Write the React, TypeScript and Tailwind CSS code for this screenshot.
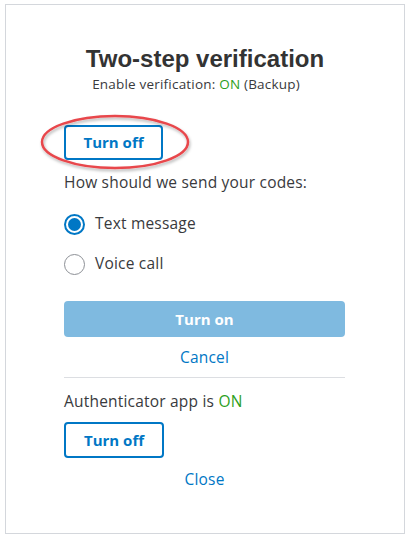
import React from "react";

const body = { fontFamily: "'Open Sans', Lato, sans-serif" };

export default function App() {
  return (
    <div className="w-[408px] h-[540px] bg-white pt-[4px] pl-[5px]" style={body}>
      <div className="w-[400px] h-[530px] border border-[#d4d7dc] bg-white flex flex-col">
        <div className="pt-[38px] flex flex-col items-center">
          <h1 className="text-[24px] font-bold leading-[32px] text-[#333]" style={{ fontFamily: "'Liberation Sans', Arial, sans-serif" }}>
            Two-step verification
          </h1>
          <p className="text-[13.5px] tracking-[0.2px] leading-[18px] text-[#393a3d] mt-[0px] -ml-[18px]">
            Enable verification: <span className="text-[#2ca01c]">ON</span> (Backup)
          </p>
        </div>
        <div className="pl-[58px] pr-[59px] flex flex-col">
          <div className="relative mt-[32px] h-[35px]">
            <button className="w-[99px] h-[35px] border-2 border-[#0077c5] rounded-[4px] text-[#0077c5] font-bold text-[15px]">
              Turn off
            </button>
            <svg className="absolute left-[-24px] top-[-12px] overflow-visible" width="152" height="60" viewBox="0 0 152 60">
              <defs>
                <filter id="sh" x="-20%" y="-40%" width="140%" height="180%">
                  <feDropShadow dx="1" dy="2" stdDeviation="1.5" floodColor="#000" floodOpacity="0.3" />
                </filter>
              </defs>
              <ellipse cx="75" cy="29" rx="73" ry="26" fill="none" stroke="#e8474c" strokeWidth="2.5" filter="url(#sh)" />
            </svg>
          </div>
          <p className="mt-[12px] text-[15.5px] tracking-[0.2px] leading-[20px] text-[#393a3d]">How should we send your codes:</p>
          <label className="mt-[22px] flex items-center gap-[10px] h-[20px]">
            <span className="w-[21px] h-[21px] rounded-full border-2 border-[#0077c5] flex items-center justify-center">
              <span className="w-[13px] h-[13px] rounded-full bg-[#0077c5]" />
            </span>
            <span className="text-[15.5px] tracking-[0.2px] text-[#393a3d]">Text message</span>
          </label>
          <label className="mt-[20px] flex items-center gap-[10px] h-[20px]">
            <span className="w-[21px] h-[21px] rounded-full border border-[#8d9096]" />
            <span className="text-[15.5px] tracking-[0.2px] text-[#393a3d]">Voice call</span>
          </label>
          <button className="mt-[27px] h-[36px] w-full rounded-[4px] bg-[#7fbae0] text-white font-bold text-[15px]">
            Turn on
          </button>
          <div className="mt-[10px] text-center text-[15.5px] tracking-[0.2px] leading-[20px] text-[#0077c5]">Cancel</div>
          <div className="mt-[10px] border-t border-[#dcdee2]" />
          <p className="mt-[13px] text-[15.5px] tracking-[0.2px] leading-[20px] text-[#393a3d]">
            Authenticator app is <span className="text-[#2ca01c]">ON</span>
          </p>
          <button className="mt-[11px] w-[100px] h-[36px] border-2 border-[#0077c5] rounded-[4px] text-[#0077c5] font-bold text-[15px]">
            Turn off
          </button>
          <div className="mt-[11px] text-center text-[15.5px] tracking-[0.2px] leading-[20px] text-[#0077c5]">Close</div>
        </div>
      </div>
    </div>
  );
}
